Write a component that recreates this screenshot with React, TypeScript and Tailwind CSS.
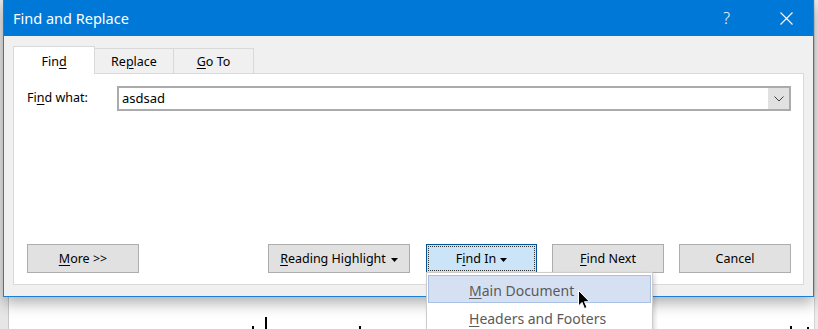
import React from 'react';

const font = { fontFamily: '"Noto Sans", "Open Sans", sans-serif' };

const Caret: React.FC<{ className?: string }> = ({ className }) => (
  <svg width="7" height="4" viewBox="0 0 7 4" className={className}>
    <path d="M0 0 H7 L3.5 4 Z" fill="#000" />
  </svg>
);

const Btn: React.FC<{ className?: string; children: React.ReactNode }> = ({ className = '', children }) => (
  <button
    className={`h-[29px] pt-[2px] flex items-center justify-center bg-[#e1e1e1] border border-[#adadad] text-[12.5px] text-black ${className}`}
  >
    {children}
  </button>
);

const App: React.FC = () => {
  return (
    <div className="relative w-[818px] h-[329px] overflow-hidden bg-white flex" style={font}>
      {/* document behind the dialog */}
      <div className="w-[9px] h-full bg-[#e6e6e6] border-r border-[#c6c6c6]" />
      <div className="flex-1 h-full pt-[317px]">
        <div className="relative h-[12px]">
          <div className="absolute left-[256px] top-0 w-[2px] h-[14px] bg-black" />
          <div className="absolute left-[243px] top-[9px] w-[2px] h-[3px] bg-black" />
          <div className="absolute left-[350px] top-[9px] w-[2px] h-[3px] bg-black" />
          <div className="absolute left-[480px] top-[9px] w-[2px] h-[3px] bg-black" />
          <div className="absolute left-[781px] top-[9px] w-[2px] h-[3px] bg-black" />
          <div className="absolute left-[798px] top-[10px] w-[2px] h-[2px] bg-black" />
        </div>
      </div>
      <div className="w-[4px] h-full bg-[#ececec] border-l border-[#d4d4d4]" />

      {/* dialog window */}
      <div className="absolute left-[3px] top-0 w-[811px] h-[297px] border border-t-0 border-[#1c7fd6] bg-[#f0f0f0] shadow-[0_6px_14px_rgba(0,0,0,0.32)] flex flex-col">
        <div className="h-[36px] bg-[#0078d7] flex items-center pl-[9px] pr-[20px] text-white">
          <span className="text-[14.5px] leading-none">Find and Replace</span>
          <span className="ml-auto text-[16px] leading-none font-light">?</span>
          <svg width="13" height="13" viewBox="0 0 13 13" className="ml-[50px]">
            <path d="M0.5 0.5 L12.5 12.5 M12.5 0.5 L0.5 12.5" stroke="#fff" strokeWidth="1.1" />
          </svg>
        </div>

        <div className="flex-1 flex flex-col px-[9px] pt-[10px] pb-[11px]">
          {/* tabs */}
          <div className="flex items-end h-[27px] text-[12.5px] text-black">
            <div className="relative z-10 w-[82px] h-[28px] -mb-px pt-[3px] bg-white border border-b-0 border-[#d9d9d9] flex items-center justify-center">
              Fin<span className="underline underline-offset-2">d</span>
            </div>
            <div className="w-[79px] h-[25px] pt-[3px] bg-[#f0f0f0] border border-l-0 border-b-0 border-[#d9d9d9] flex items-center justify-center">
              Re<span className="underline underline-offset-2">p</span>lace
            </div>
            <div className="w-[80px] h-[25px] pt-[3px] bg-[#f0f0f0] border border-l-0 border-b-0 border-[#d9d9d9] flex items-center justify-center">
              <span className="underline underline-offset-2">G</span>o To
            </div>
          </div>

          {/* panel */}
          <div className="flex-1 bg-white border border-[#d9d9d9] flex flex-col justify-between pl-[13px] pr-[12px] pt-[12px] pb-[11px]">
            <div className="flex items-center text-[12.5px] text-black">
              <span className="w-[90px]">
                Fi<span className="underline underline-offset-2">n</span>d what:
              </span>
              <div className="flex-1 h-[25px] border-2 border-[#ababab] flex items-center">
                <span className="flex-1 pl-[3px] text-[13px]">asdsad</span>
                <div className="w-[21px] h-full bg-[#e1e1e1] flex items-center justify-center">
                  <svg width="10" height="6" viewBox="0 0 10 6">
                    <path d="M0.5 0.5 L5 5 L9.5 0.5" fill="none" stroke="#404040" strokeWidth="1" />
                  </svg>
                </div>
              </div>
            </div>

            <div className="flex items-center">
              <Btn className="w-[112px]">
                <span className="underline underline-offset-2">M</span>ore &gt;&gt;
              </Btn>
              <Btn className="w-[142px] ml-auto gap-[5px]">
                <span>
                  <span className="underline underline-offset-2">R</span>eading Highlight
                </span>
                <Caret />
              </Btn>
              <button className="w-[111px] h-[29px] ml-[16px] bg-[#cce4f7] border border-[#005499] p-px">
                <div className="w-full h-full pt-[2px] border border-dotted border-[#333] flex items-center justify-center gap-[4px] text-[12.5px] text-black">
                  <span>
                    F<span className="underline underline-offset-2">i</span>nd In
                  </span>
                  <Caret />
                </div>
              </button>
              <Btn className="w-[112px] ml-[15px]">
                <span className="underline underline-offset-2">F</span>ind Next
              </Btn>
              <Btn className="w-[112px] ml-[15px]">Cancel</Btn>
            </div>
          </div>
        </div>
      </div>

      {/* Find In menu */}
      <div className="absolute left-[426px] top-[272px] w-[227px] h-[70px] bg-white border border-[#cccccc] shadow-[2px_2px_4px_rgba(0,0,0,0.15)] pt-[2px] px-px text-[14px] text-[#5a5a5a]">
        <div className="h-[28px] pt-[2px] bg-[#d5e1f3] border border-[#a9c0e4] flex items-center pl-[40px]">
          <span>
            <span className="underline underline-offset-2">M</span>ain Document
          </span>
        </div>
        <div className="h-[28px] pt-[2px] flex items-center pl-[41px]">
          <span>
            <span className="underline underline-offset-2">H</span>eaders and Footers
          </span>
        </div>
      </div>

      {/* mouse pointer */}
      <svg width="13" height="20" viewBox="0 0 13 20" className="absolute left-[578px] top-[290px]">
        <path d="M0.5 0.5 V16 L4 12.5 L6.5 18.5 L9 17.5 L6.5 11.7 H11.5 Z" fill="#000" stroke="#fff" strokeWidth="1" />
      </svg>
    </div>
  );
};

export default App;
